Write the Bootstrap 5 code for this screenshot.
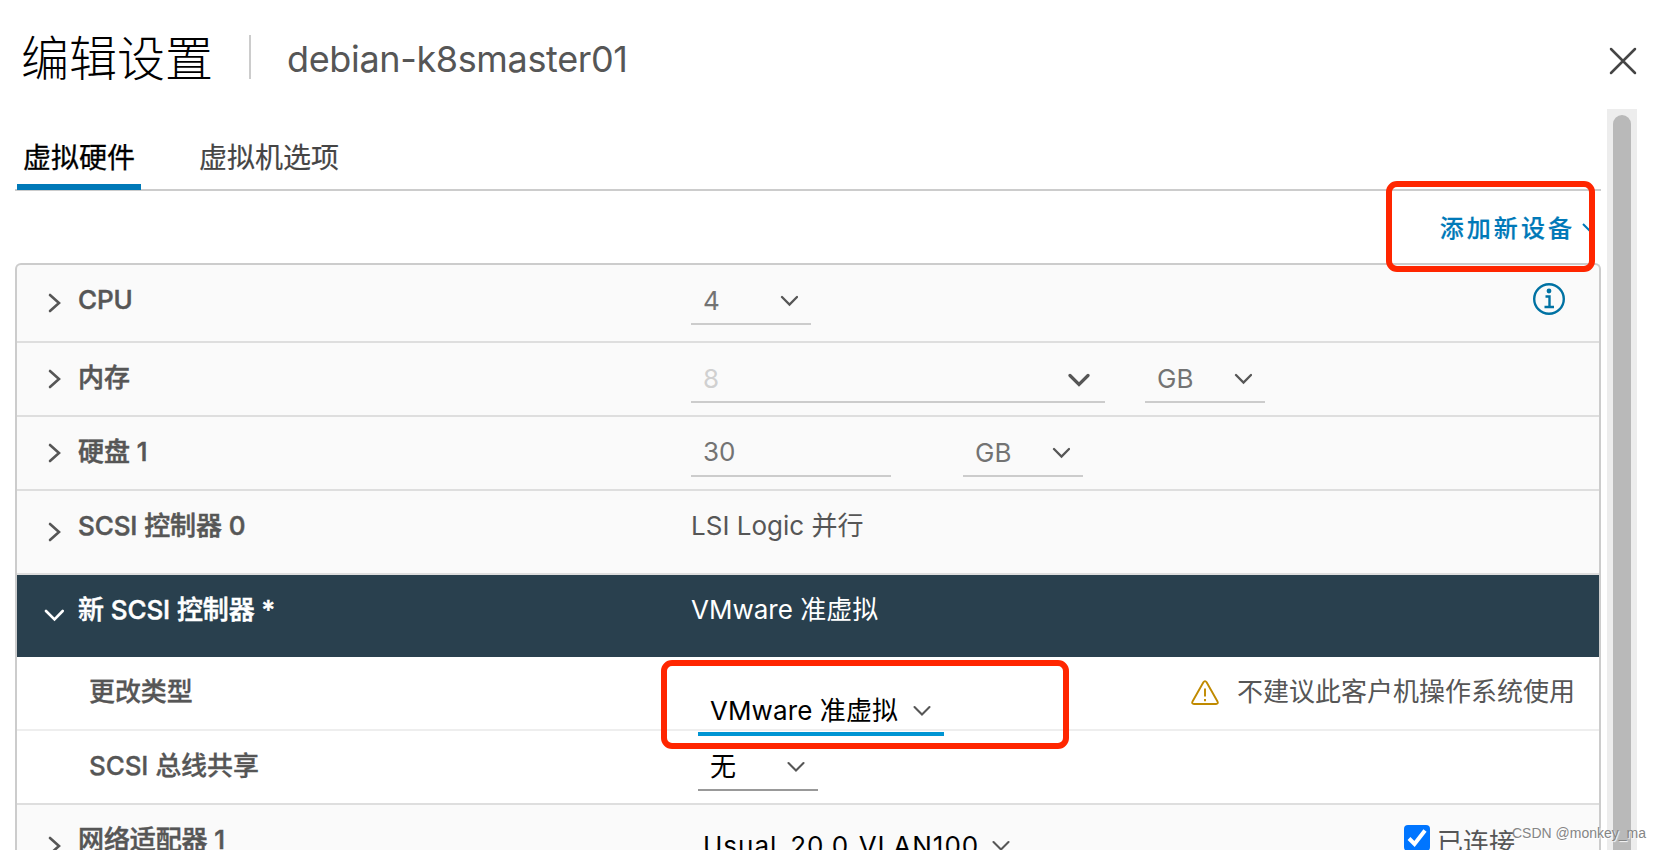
<!DOCTYPE html>
<html lang="zh-CN">
<head>
  <meta charset="UTF-8">
  <title>编辑设置</title>
  <link href="https://cdn.jsdelivr.net/npm/bootstrap@5.3.0/dist/css/bootstrap.min.css" rel="stylesheet">
  <style>
    body {
      font-family: Inter, "Noto Sans CJK SC", sans-serif;
      font-size: 26px;
      line-height: 36px;
      color: #565656;
      background: #fff;
    }
    .dialog {
      width: 1660px;
      height: 850px;
    }
    .dialog-head {
      height: 109px;
      padding: 26px 23px 0 21px;
    }
    .dialog-title {
      font-size: 48px;
      line-height: 65px;
      width: 190px;
      font-weight: 300;
      color: #000;
    }
    .title-rule {
      width: 2px;
      height: 44px;
      margin: 9px 36px 0 38px;
      background: #ccc;
    }
    .vm-name {
      font-size: 36px;
      line-height: 66px;
      letter-spacing: -.35px;
    }
    .close-btn { margin-top: 21px; }
    svg { display: block; flex: none; fill: none; stroke: #565656; }
    .settings {
      width: 1586px;
      margin-left: 15px;
    }
    .tab-bar {
      height: 82px;
      border-bottom: 2px solid #ccc;
      font-size: 28px;
      line-height: 40px;
      padding: 27px 0 0 2px;
    }
    .tab-item {
      height: 54px;
      padding: 2px 6px 0;
      color: #454545;
      -webkit-text-stroke: .2px;
    }
    .tab-item.current {
      color: #000;
      border-bottom: 6px solid #0079b8;
      width: 124px;
      margin-right: 52px;
      -webkit-text-stroke: .3px;
    }
    .add-bar {
      height: 72px;
      padding: 20px 6px 0 0;
      color: #0079b8;
      font-size: 24px;
      letter-spacing: 3.05px;
      font-weight: 500;
      -webkit-text-stroke: .2px;
    }
    .add-bar svg { stroke: #0079b8; margin: 12px 0 0 7px; }
    .hw-list {
      border: 2px solid #ccc;
      border-bottom: 0;
      border-radius: 6px 6px 0 0;
      background: #fafafa;
      height: 587px;
    }
    .hw-row {
      height: 74px;
      border-bottom: 2px solid #dedede;
    }
    .hw-row.r78 { height: 78px; }
    .hw-row.r84 { height: 84px; }
    .hw-row.open {
      height: 82px;
      border: 0;
      background: #29404e;
      color: #fff;
    }
    .hw-row.open svg { stroke: #fff; }
    .hw-row.sub { border-color: #eee; }
    .hw-row.sub + .hw-row.sub { border-color: #dedede; }
    .sub-group { background: #fff; }
    .hw-label {
      width: 674px;
      font-weight: 500;
      letter-spacing: -.1px;
      padding-top: 17px;
      -webkit-text-stroke: .5px;
    }
    .hw-label .arrow { width: 61px; padding-left: 27px; }
    .sub .hw-label { padding-left: 72px; -webkit-text-stroke: .3px; }
    .a1 { padding-top: 10px; }
    .a2 { padding-top: 8px; }
    .a3 { padding-top: 13px; }
    .plain { padding-top: 17px; }
    .info-icon { stroke: #0072a3; }
    .ctl {
      height: 47px;
      line-height: 44px;
      margin-top: 13px;
      padding: 0 13px 0 12px;
      border-bottom: 2px solid #ccc;
      color: #737373;
      width: 120px;
    }
    .ctl.dark { color: #000; border-color: #999; margin-left: 7px; }
    .ctl.focus {
      width: 246px;
      margin-top: 32px;
      border-bottom: 4px solid #0095d3;
      letter-spacing: .1px;
    }
    .w-mem { width: 414px; margin-right: 40px; color: #d0d0d0; }
    .w-disk { width: 200px; margin-right: 72px; line-height: 43px; }
    .w-net { width: 332px; margin-top: 18px; color: #000; letter-spacing: 1px; }
    .warn { margin: 17px 24px 0 auto; }
    .warn svg { stroke: #c08a00; margin: 6px 18px 0 0; }
    .linked { margin: 20px 84px 0 auto; }
    .tick {
      width: 26px;
      height: 26px;
      margin-right: 7px;
      border-radius: 4px;
      background: #0075ff;
    }
    .tick svg { stroke: #fff; }
    .scroll-track {
      width: 30px;
      height: 741px;
      margin-left: 6px;
      padding: 6px 6px 0;
      background: #ededed;
    }
    .scroll-thumb {
      height: 100%;
      border-radius: 9px 9px 0 0;
      background: #b9b9b9;
    }
    .marker {
      border: 6px solid #ff2600;
      border-radius: 11px;
    }
    .marker-add { left: 1386px; top: 181px; width: 209px; height: 91px; }
    .marker-type { left: 661px; top: 660px; width: 408px; height: 89px; }
    .watermark {
      left: 1512px;
      top: 823px;
      font: 14px/20px "Liberation Sans", sans-serif;
      color: #858585;
      text-shadow: 1px 1px 1px #fff;
    }
  </style>
</head>
<body>
  <div class="dialog position-relative overflow-hidden">
    <div class="dialog-head d-flex align-items-start">
      <div class="dialog-title text-nowrap">编辑设置</div>
      <div class="title-rule"></div>
      <div class="vm-name">debian-k8smaster01</div>
      <svg class="close-btn ms-auto" width="28" height="28" viewBox="0 0 28 28" stroke-width="2.5" stroke-linecap="round"><path d="M2 2L26 26M26 2L2 26" stroke="#454545"/></svg>
    </div>

    <div class="d-flex align-items-start">
      <div class="settings">
        <div class="tab-bar d-flex">
          <div class="tab-item current text-nowrap">虚拟硬件</div>
          <div class="tab-item">虚拟机选项</div>
        </div>
        <div class="add-bar d-flex justify-content-end">
          <span>添加新设备</span>
          <svg width="13" height="10" viewBox="0 0 13 10" stroke-width="2"><path d="M1 1L8 8L15 1"/></svg>
        </div>

        <div class="hw-list">
          <div class="hw-row r78 d-flex">
            <div class="hw-label d-flex">
              <div class="arrow a1"><svg width="20" height="22" viewBox="0 0 20 22" stroke-width="2.6" stroke-linecap="round"><path d="M6 3L15 11L6 19"/></svg></div>
              CPU
            </div>
            <div class="ctl d-flex justify-content-between align-items-center">4<svg width="18" height="12" viewBox="0 0 18 12" stroke-width="2.3" stroke-linecap="round"><path d="M2 2L9.500 9.500L17 2"/></svg></div>
            <svg class="info-icon ms-auto me-3" width="68" height="68" viewBox="0 0 68 68" stroke-width="2.4"><circle cx="34" cy="34" r="14.800"/><path d="M30.500 31.500H34.500V41.500M29.500 42H39"/><circle cx="34" cy="26" r="1.200"/></svg>
          </div>

          <div class="hw-row d-flex">
            <div class="hw-label d-flex">
              <div class="arrow a2"><svg width="20" height="22" viewBox="0 0 20 22" stroke-width="2.6" stroke-linecap="round"><path d="M6 3L15 11L6 19"/></svg></div>
              内存
            </div>
            <div class="ctl w-mem d-flex justify-content-between align-items-center">8<svg width="24" height="16" viewBox="0 0 24 16" stroke-width="3.2" stroke-linecap="round"><path d="M2 4.500L11 13.500L20 4.500"/></svg></div>
            <div class="ctl d-flex justify-content-between align-items-center">GB<svg width="18" height="12" viewBox="0 0 18 12" stroke-width="2.3" stroke-linecap="round"><path d="M2 2L9.500 9.500L17 2"/></svg></div>
          </div>

          <div class="hw-row d-flex">
            <div class="hw-label d-flex">
              <div class="arrow a2"><svg width="20" height="22" viewBox="0 0 20 22" stroke-width="2.6" stroke-linecap="round"><path d="M6 3L15 11L6 19"/></svg></div>
              硬盘 1
            </div>
            <div class="ctl w-disk">30</div>
            <div class="ctl d-flex justify-content-between align-items-center">GB<svg width="18" height="12" viewBox="0 0 18 12" stroke-width="2.3" stroke-linecap="round"><path d="M2 2L9.500 9.500L17 2"/></svg></div>
          </div>

          <div class="hw-row r84 d-flex">
            <div class="hw-label d-flex">
              <div class="arrow a3"><svg width="20" height="22" viewBox="0 0 20 22" stroke-width="2.6" stroke-linecap="round"><path d="M6 3L15 11L6 19"/></svg></div>
              SCSI 控制器 0
            </div>
            <div class="plain">LSI Logic 并行</div>
          </div>

          <div class="hw-row open d-flex">
            <div class="hw-label d-flex">
              <div class="arrow a3"><svg width="20" height="22" viewBox="0 0 20 22" stroke-width="2.6" stroke-linecap="round"><path d="M2 6L10.500 14.500L18.700 6"/></svg></div>
              新 SCSI 控制器 *
            </div>
            <div class="plain">VMware 准虚拟</div>
          </div>

          <div class="sub-group">
            <div class="hw-row sub d-flex">
              <div class="hw-label">更改类型</div>
              <div class="ctl dark focus d-flex justify-content-between align-items-center">VMware 准虚拟<svg width="18" height="12" viewBox="0 0 18 12" stroke-width="2.1" stroke-linecap="round"><path d="M1.500 2L9 9.500L16.500 2"/></svg></div>
              <div class="warn d-flex">
                <svg width="28" height="26" viewBox="0 0 28 26" stroke-width="1.900" stroke-linejoin="round"><path d="M12.400 2.300Q14 0 15.600 2.300L26.500 21.500Q27.500 24 25 24H3Q.5 24 1.500 21.500Z"/><path d="M14 8.500V16.500M14 19V21.200"/></svg>
                不建议此客户机操作系统使用
              </div>
            </div>
            <div class="hw-row sub d-flex">
              <div class="hw-label">SCSI 总线共享</div>
              <div class="ctl dark d-flex justify-content-between align-items-center">无<svg width="18" height="12" viewBox="0 0 18 12" stroke-width="2.1" stroke-linecap="round"><path d="M1.500 2L9 9.500L16.500 2"/></svg></div>
            </div>
          </div>

          <div class="hw-row d-flex">
            <div class="hw-label d-flex">
              <div class="arrow a3"><svg width="20" height="22" viewBox="0 0 20 22" stroke-width="2.6" stroke-linecap="round"><path d="M6 3L15 11L6 19"/></svg></div>
              网络适配器 1
            </div>
            <div class="ctl w-net d-flex justify-content-between align-items-center">Usual_20.0_VLAN100<svg width="18" height="12" viewBox="0 0 18 12" stroke-width="2.1" stroke-linecap="round"><path d="M1.500 2L9 9.500L16.500 2"/></svg></div>
            <div class="linked d-flex">
              <div class="tick"><svg width="26" height="26" viewBox="0 0 26 26" stroke-width="4"><path d="M5 13.500L10.500 19L21 5.500"/></svg></div>
              已连接
            </div>
          </div>
        </div>
      </div>
      <div class="scroll-track"><div class="scroll-thumb"></div></div>
    </div>

    <div class="marker marker-add position-absolute"></div>
    <div class="marker marker-type position-absolute"></div>
    <div class="watermark position-absolute text-nowrap">CSDN @monkey_ma</div>
  </div>

  <script src="https://cdn.jsdelivr.net/npm/bootstrap@5.3.0/dist/js/bootstrap.bundle.min.js"></script>
</body>
</html>
